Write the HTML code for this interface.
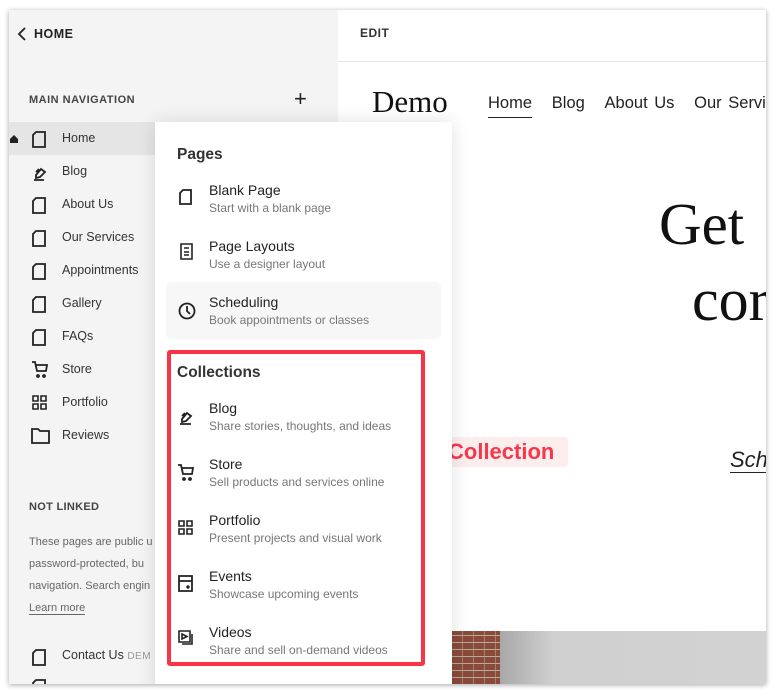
<!DOCTYPE html>
<html><head><style>
*{margin:0;padding:0;box-sizing:border-box}
body{width:780px;height:696px;background:#fff;position:relative;overflow:hidden;font-family:"Liberation Sans",sans-serif;color:#222}
.frame{position:absolute;left:9px;top:10px;width:757px;height:674px;box-shadow:0 1px 5px rgba(0,0,0,.35);overflow:hidden;background:#fff}
.side{position:absolute;left:0;top:0;width:329px;height:674px;background:#f4f4f4}
.abs{position:absolute}
.nav{position:absolute;left:53px;font-size:12.5px;color:#333}
.ic{position:absolute}
.pop{position:absolute;left:146px;top:112px;width:297px;height:580px;background:#fff;box-shadow:0 0 18px rgba(0,0,0,.12)}
.t{position:absolute;left:54px;font-size:14px;color:#222}
.s{position:absolute;left:54px;font-size:12px;color:#777}
</style></head><body>
<div class="frame">
 <div class="side">
  <svg class="ic" style="left:8px;top:17px" width="12" height="14"><path d="M8 1L2 7l6 6" stroke="#222" stroke-width="1.8" fill="none"/></svg>
  <div class="abs" style="left:25px;top:17px;font-size:12.5px;font-weight:bold;letter-spacing:.5px;color:#222">HOME</div>
  <div class="abs" style="left:20px;top:84px;font-size:11px;font-weight:bold;letter-spacing:.5px;color:#444">MAIN NAVIGATION</div>
  <div class="abs" style="left:285px;top:76px;font-size:22px;font-weight:300;color:#222">+</div>
  <div class="abs" style="left:0;top:112px;width:146px;height:33px;background:#e5e5e5"></div>
  <svg class="ic" style="left:0;top:124px" width="10" height="10"><path d="M1 5L5 1l4 4v4H1z" fill="#222"/></svg>
  <div class="nav" style="top:121px">Home</div>
  <div class="nav" style="top:154px">Blog</div>
  <div class="nav" style="top:187px">About Us</div>
  <div class="nav" style="top:220px">Our Services</div>
  <div class="nav" style="top:253px">Appointments</div>
  <div class="nav" style="top:286px">Gallery</div>
  <div class="nav" style="top:319px">FAQs</div>
  <div class="nav" style="top:352px">Store</div>
  <div class="nav" style="top:385px">Portfolio</div>
  <div class="nav" style="top:418px">Reviews</div>
  <svg class="ic" style="left:22px;top:118px" width="20" height="340" fill="none" stroke="#222" stroke-width="1.8">
   <path d="M5 4h9v15H2V7z"/>
   <path d="M3 52h10M5 47l5-6 4 3-5 5-4 1zM5 44l3-3" />
   <path d="M5 70h9v15H2V73z"/><path d="M5 103h9v15H2V106z"/><path d="M5 136h9v15H2V139z"/><path d="M5 169h9v15H2V172z"/><path d="M5 202h9v15H2V205z"/>
   <path d="M1 234h3l2 9h9l1-6H5"/><circle cx="7" cy="248" r="1" fill="#222"/><circle cx="13" cy="248" r="1" fill="#222"/>
   <path d="M2 268h5v5H2zM10 268h5v5h-5zM2 276h5v5H2zM10 276h5v5h-5z" stroke-width="1.6"/>
   <path d="M1 301h6l2 2h9v12H1z"/>
  </svg>
  <div class="abs" style="left:20px;top:491px;font-size:11px;font-weight:bold;letter-spacing:.3px;color:#444">NOT LINKED</div>
  <div class="abs" style="left:20px;top:521px;font-size:11px;line-height:22px;color:#666;width:130px;overflow:hidden;white-space:nowrap">These pages are public u<br>password-protected, bu<br>navigation. Search engin<br><span style="border-bottom:1px solid #666">Learn more</span></div>
  <svg class="ic" style="left:22px;top:636px" width="20" height="40" fill="none" stroke="#222" stroke-width="1.8"><path d="M5 4h9v15H2V7z"/><path d="M5 34h9v10H2V37z"/></svg>
  <div class="nav" style="top:638px">Contact Us <span style="font-size:10px;color:#999;letter-spacing:.5px">DEM</span></div>
 </div>
 <div class="abs" style="left:329px;top:0;width:428px;height:52px;border-bottom:1px solid #e6e6e6;background:#fff"></div>
 <div class="abs" style="left:351px;top:16px;font-size:12px;font-weight:bold;letter-spacing:.5px;color:#333">EDIT</div>
 <div class="abs" style="left:363px;top:74px;font-family:'Liberation Serif',serif;font-size:31px;color:#111">Demo</div>
 <div class="abs" style="left:479px;top:84px;font-size:16.5px;color:#222;white-space:nowrap;word-spacing:2px">
  <span style="border-bottom:1px solid #222;padding-bottom:5px">Home</span>&nbsp;&nbsp;&nbsp;Blog&nbsp;&nbsp;&nbsp;About Us&nbsp;&nbsp;&nbsp;Our Servic</div>
 <div class="abs" style="left:650px;top:180px;font-family:'Liberation Serif',serif;font-size:59px;color:#111">Get</div>
 <div class="abs" style="left:683px;top:256px;font-family:'Liberation Serif',serif;font-size:60px;color:#111">cor</div>
 <div class="abs" style="left:721px;top:437px;font-size:22px;font-style:italic;color:#222;border-bottom:1px solid #222;line-height:25px">Sch</div>
 <div class="abs" style="left:443px;top:621px;width:48px;height:60px;background:repeating-linear-gradient(90deg,rgba(0,0,0,0) 0 10px,rgba(180,160,150,.6) 10px 11px),repeating-linear-gradient(0deg,#8a4a3a 0 6px,#b9a89c 6px 7px),#8a4a3a"></div>
 <div class="abs" style="left:491px;top:621px;width:266px;height:60px;background:linear-gradient(90deg,#a8a8a8,#d0d0d0 20%,#d2d2d2)"></div>
 <div class="abs" style="left:432px;top:427px;width:127px;height:30px;background:#fdeeee;border-radius:3px"></div>
 <div class="abs" style="left:439px;top:429px;font-size:22px;font-weight:bold;color:#f8384a">Collection</div>

 <div class="pop">
  <div class="abs" style="left:22px;top:24px;font-size:15.5px;font-weight:bold;color:#333">Pages</div>
  <div class="abs" style="left:11px;top:160px;width:275px;height:57px;background:#f7f7f7;border-radius:5px"></div>
  <div class="t" style="top:60px">Blank Page</div><div class="s" style="top:79px">Start with a blank page</div>
  <div class="t" style="top:116px">Page Layouts</div><div class="s" style="top:135px">Use a designer layout</div>
  <div class="t" style="top:172px">Scheduling</div><div class="s" style="top:191px">Book appointments or classes</div>
  <div class="abs" style="left:12px;top:228px;width:258px;height:316px;border:4px solid #fb3347;border-radius:3px"></div>
  <div class="abs" style="left:22px;top:242px;font-size:15.5px;font-weight:bold;color:#333">Collections</div>
  <div class="t" style="top:278px">Blog</div><div class="s" style="top:297px">Share stories, thoughts, and ideas</div>
  <div class="t" style="top:334px">Store</div><div class="s" style="top:353px">Sell products and services online</div>
  <div class="t" style="top:390px">Portfolio</div><div class="s" style="top:409px">Present projects and visual work</div>
  <div class="t" style="top:446px">Events</div><div class="s" style="top:465px">Showcase upcoming events</div>
  <div class="t" style="top:502px">Videos</div><div class="s" style="top:521px">Share and sell on-demand videos</div>
  <svg class="ic" style="left:23px;top:64px" width="20" height="480" fill="none" stroke="#222" stroke-width="1.8">
   <path d="M5 4h8v14H2V7z"/>
   <path d="M3 58h11v15H3zM6 62h5M6 66h5M6 69h5" stroke-width="1.6"/>
   <circle cx="9" cy="125" r="7.5"/><path d="M9 120v5l3 3"/>
   <g transform="translate(0,-58)">
   <path d="M2 296h11M4 291l5-6 4 3-5 5-4 1zM4 288l3-3"/>
   <path d="M0 337h3l2 9h9l1-6H4"/><circle cx="6" cy="351" r="1" fill="#222"/><circle cx="12" cy="351" r="1" fill="#222"/>
   <path d="M1 393h5v5H1zM9 393h5v5H9zM1 401h5v5H1zM9 401h5v5H9z" stroke-width="1.6"/>
   <path d="M1 448h13v15H1zM1 453h13"/><circle cx="10" cy="459" r=".8" fill="#222"/>
   <path d="M1 503h11v11H1zM4 506l5 2.5-5 2.5zM14 506v10H4" stroke-width="1.6"/>
   </g>
  </svg>
 </div>
</div>
</body></html>
